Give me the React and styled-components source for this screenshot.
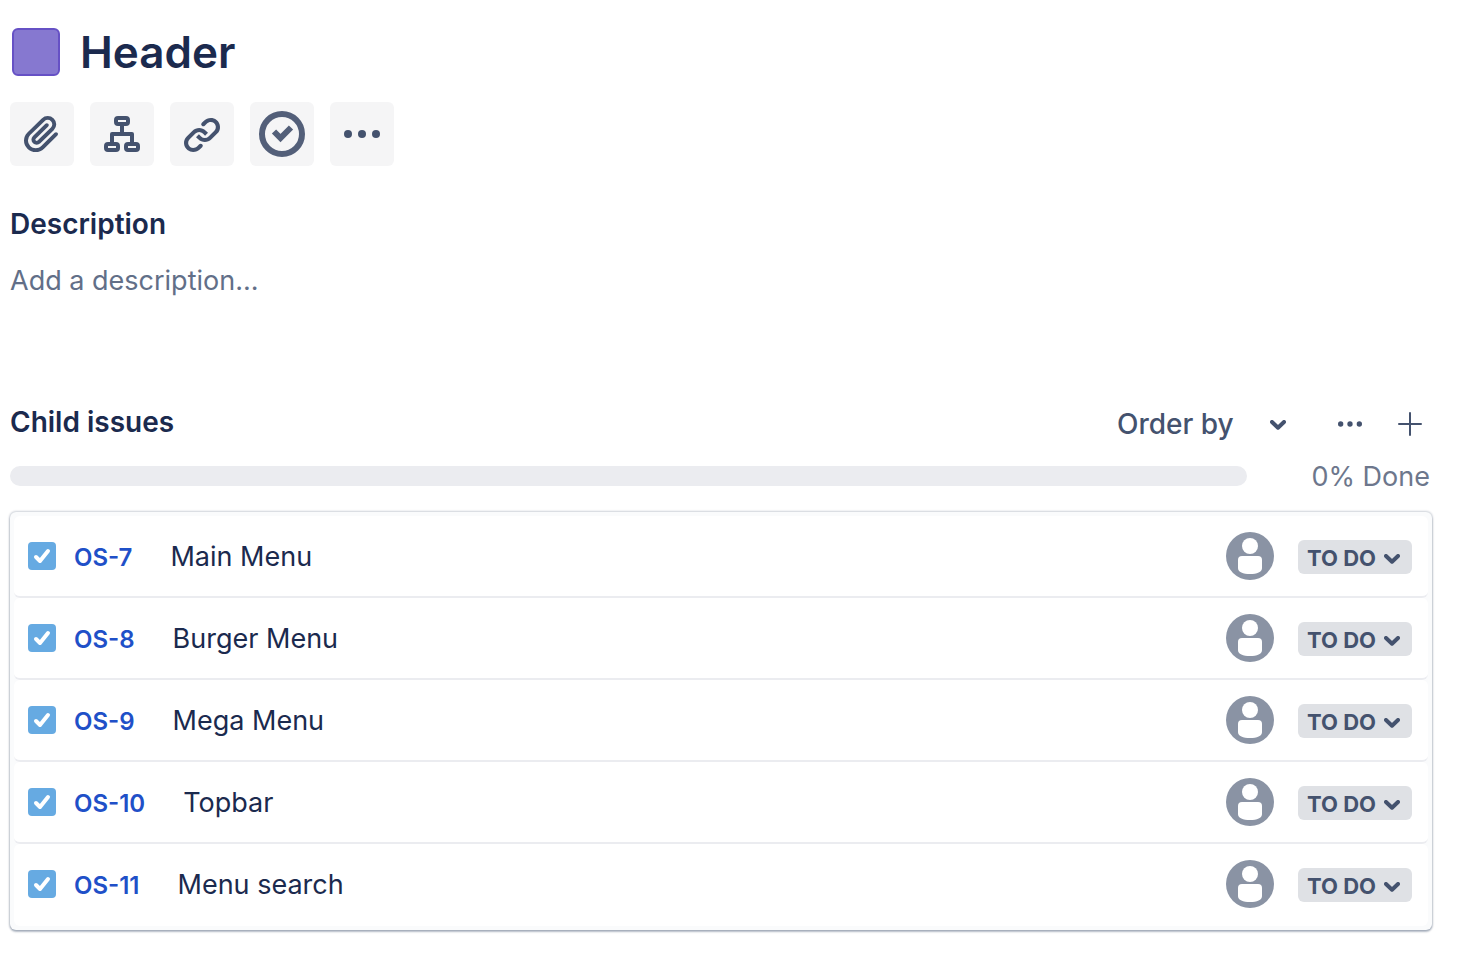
import React from 'react';
import styled, { createGlobalStyle } from 'styled-components';

const GlobalStyle = createGlobalStyle`
  *, *::before, *::after {
    box-sizing: border-box;
  }
  body {
    margin: 0;
    background: #fff;
    color: #1b2a4e;
    font-family: Inter, 'Liberation Sans', sans-serif;
    font-size: 27px;
    line-height: 40px;
  }
  button, input, select {
    font: inherit;
    color: inherit;
  }
`;

const issues = [
  { key: 'OS-7', summary: 'Main Menu' },
  { key: 'OS-8', summary: 'Burger Menu' },
  { key: 'OS-9', summary: 'Mega Menu' },
  { key: 'OS-10', summary: 'Topbar' },
  { key: 'OS-11', summary: 'Menu search' },
];

const AttachmentIcon = () => (
  <svg width="48" height="48" viewBox="0 0 24 24" fill="currentColor" aria-hidden="true">
    <path d="M11.643 17.965c-1.53 1.495-4.016 1.496-5.542.004a3.773 3.773 0 01.002-5.412l7.147-6.985a2.316 2.316 0 013.233-.003c.893.873.895 2.282.004 3.153l-6.703 6.55a.653.653 0 01-.914-.008.62.62 0 010-.902l6.229-6.087a.941.941 0 000-1.353.995.995 0 00-1.384 0l-6.23 6.087a2.502 2.502 0 000 3.607 2.643 2.643 0 003.683.009l6.703-6.55a4.074 4.074 0 00-.003-5.859 4.306 4.306 0 00-6.002.003l-7.148 6.985a5.655 5.655 0 00-.001 8.118c2.29 2.237 6.015 2.238 8.308-.004l6.682-6.53a.942.942 0 000-1.353.995.995 0 00-1.384 0l-6.68 6.53z" />
  </svg>
);

const ChildIssuesIcon = () => (
  <svg width="48" height="48" viewBox="0 0 24 24" fill="none" stroke="currentColor" strokeWidth="2" aria-hidden="true">
    <rect x="9" y="4" width="6" height="3" rx="1" />
    <rect x="4" y="17" width="6" height="3" rx="1" />
    <rect x="14" y="17" width="6" height="3" rx="1" />
    <path d="M12 8v4M7 16.500V12h10v4.500" strokeLinejoin="round" />
  </svg>
);

const LinkIcon = () => (
  <svg width="48" height="48" viewBox="0 0 24 24" fill="currentColor" aria-hidden="true">
    <path d="M12.856 5.457l-.937.92a1.002 1.002 0 000 1.437 1.047 1.047 0 001.463 0l.984-.966c.967-.95 2.542-1.135 3.602-.288a2.54 2.54 0 01.203 3.81l-2.903 2.852a2.646 2.646 0 01-3.696 0l-1.11-1.09L9 13.57l1.108 1.089c1.822 1.788 4.802 1.788 6.622 0l2.905-2.852a4.558 4.558 0 00-.357-6.82c-1.893-1.517-4.695-1.226-6.422.47" />
    <path d="M11.144 19.543l.937-.92a1.002 1.002 0 000-1.437 1.047 1.047 0 00-1.462 0l-.985.966c-.967.95-2.542 1.135-3.602.288a2.54 2.54 0 01-.203-3.81l2.903-2.852a2.646 2.646 0 013.696 0l1.11 1.09L15 11.43l-1.108-1.089c-1.822-1.788-4.802-1.788-6.622 0l-2.905 2.852a4.558 4.558 0 00.357 6.82c1.893 1.517 4.695 1.226 6.422-.47" />
  </svg>
);

const CheckCircleIcon = () => (
  <svg width="48" height="48" viewBox="0 0 48 48" fill="none" stroke="#535f79" strokeWidth="6" aria-hidden="true">
    <circle cx="24" cy="24" r="20" />
    <path d="M16 21.500l6.500 6.500 10.500-10.500" />
  </svg>
);

const MoreIcon = ({ size = 48 }) => (
  <svg width={size} height={size} viewBox="0 0 48 48" fill="currentColor" aria-hidden="true">
    <circle cx="10" cy="24" r="4" />
    <circle cx="24" cy="24" r="4" />
    <circle cx="38" cy="24" r="4" />
  </svg>
);

const PlusIcon = () => (
  <svg width="24" height="24" viewBox="0 0 24 24" fill="none" stroke="currentColor" strokeWidth="2" strokeLinecap="round" aria-hidden="true">
    <path d="M12 1v22M1 12h22" />
  </svg>
);

const ChevronIcon = () => (
  <svg width="16" height="10" viewBox="0 0 16 10" fill="none" stroke="currentColor" strokeWidth="4" strokeLinecap="round" strokeLinejoin="round" aria-hidden="true">
    <path d="M2 2l6 5.700L14 2" />
  </svg>
);

const AvatarIcon = () => (
  <svg width="48" height="48" viewBox="0 0 48 48" role="img" aria-label="Unassigned">
    <circle cx="24" cy="24" r="24" fill="#8a93a4" />
    <circle cx="24" cy="14" r="8" fill="#fff" />
    <path d="M16 24h16a4 4 0 014 4v8c0 4-5 6-12 6s-12-2-12-6v-8a4 4 0 014-4z" fill="#fff" />
  </svg>
);

const App = () => {
  return (
    <Page>
      <GlobalStyle />
      <TitleBar>
        <EpicColor />
        <Title>Header</Title>
      </TitleBar>

      <Toolbar>
        <ToolButton aria-label="Attach"><AttachmentIcon /></ToolButton>
        <ToolButton aria-label="Add a child issue"><ChildIssuesIcon /></ToolButton>
        <ToolButton aria-label="Link issue"><LinkIcon /></ToolButton>
        <ToolButton aria-label="Checklist"><CheckCircleIcon /></ToolButton>
        <ToolButton aria-label="More"><MoreIcon /></ToolButton>
      </Toolbar>

      <Description>
        <SectionTitle as="label" htmlFor="description">Description</SectionTitle>
        <DescriptionInput id="description" type="text" placeholder="Add a description..." />
      </Description>

      <SectionHeader>
        <SectionTitle>Child issues</SectionTitle>
        <Actions>
          <OrderBy>
            <OrderSelect aria-label="Order by">
              <option>Order by</option>
            </OrderSelect>
            <ChevronIcon />
          </OrderBy>
          <IconButton aria-label="More actions"><MoreIcon size={32} /></IconButton>
          <IconButton aria-label="Create child issue"><PlusIcon /></IconButton>
        </Actions>
      </SectionHeader>

      <ProgressRow>
        <ProgressTrack role="progressbar" aria-label="Done" aria-valuenow={0} aria-valuemin={0} aria-valuemax={100} />
        <ProgressLabel>0% Done</ProgressLabel>
      </ProgressRow>

      <IssueList>
        {issues.map((issue) => (
          <IssueRow key={issue.key}>
            <Check>
              <CheckInput type="checkbox" defaultChecked aria-label={issue.summary} />
              <svg width="28" height="28" viewBox="0 0 28 28" fill="none" stroke="#fff" strokeWidth="4" strokeLinecap="round" strokeLinejoin="round" aria-hidden="true">
                <path d="M8 15l4 4 8-10" />
              </svg>
            </Check>
            <IssueKey href={`#${issue.key}`}>{issue.key}</IssueKey>
            <Summary>{issue.summary}</Summary>
            <AvatarIcon />
            <Status>
              <StatusSelect aria-label={`${issue.key} status`}>
                <option>TO DO</option>
              </StatusSelect>
              <ChevronIcon />
            </Status>
          </IssueRow>
        ))}
      </IssueList>
    </Page>
  );
};

const Page = styled.main`
  padding: 20px 52px 40px 10px;
`;

const TitleBar = styled.header`
  display: flex;
  align-items: center;
  gap: 20px;
  height: 64px;
  padding-left: 2px;
`;

const EpicColor = styled.span`
  width: 48px;
  height: 48px;
  border: 2px solid #6651c5;
  border-radius: 6px;
  background: #8678d0;
`;

const Title = styled.h1`
  margin: 0;
  font-size: 44px;
  font-weight: 600;
  line-height: 56px;
`;

const Toolbar = styled.div`
  display: flex;
  gap: 16px;
  margin-top: 18px;
`;

const ToolButton = styled.button`
  display: flex;
  align-items: center;
  justify-content: center;
  width: 64px;
  height: 64px;
  padding: 0;
  border: 0;
  border-radius: 6px;
  background: #f5f5f6;
  color: #44526e;
  cursor: pointer;
`;

const Description = styled.section`
  display: flex;
  flex-direction: column;
  gap: 17px;
  margin-top: 38px;
`;

const SectionTitle = styled.h2`
  margin: 0;
  font-size: 28px;
  font-weight: 600;
  line-height: 40px;
`;

const DescriptionInput = styled.input`
  height: 40px;
  padding: 0;
  border: 0;
  outline: 0;
  background: none;
  &::placeholder {
    color: #626f88;
    opacity: 1;
  }
`;

const SectionHeader = styled.div`
  display: flex;
  align-items: flex-start;
  justify-content: space-between;
  margin-top: 101px;
`;

const Actions = styled.div`
  display: flex;
  align-items: center;
  padding: 2px 2px 0 0;
  color: #44526e;
`;

const OrderBy = styled.div`
  display: grid;
  align-items: center;
  margin-right: 44px;
  > * {
    grid-area: 1 / 1;
  }
  svg {
    justify-self: end;
    margin-top: 2px;
    pointer-events: none;
  }
`;

const OrderSelect = styled.select`
  appearance: none;
  height: 40px;
  padding: 0 52px 0 0;
  border: 0;
  background: none;
  font-size: 28px;
  font-weight: 500;
  cursor: pointer;
`;

const IconButton = styled.button`
  display: flex;
  align-items: center;
  justify-content: center;
  width: 40px;
  height: 40px;
  padding: 0;
  border: 0;
  background: none;
  cursor: pointer;
  & + & {
    margin-left: 20px;
  }
`;

const ProgressRow = styled.div`
  display: flex;
  align-items: center;
  gap: 64px;
  margin-top: 11px;
  padding-right: 2px;
`;

const ProgressTrack = styled.div`
  flex: 1;
  height: 20px;
  border-radius: 10px;
  background: #ebecf0;
`;

const ProgressLabel = styled.span`
  padding-top: 2px;
  color: #6d778c;
`;

const IssueList = styled.ul`
  margin: 15px 0 0;
  padding: 4px;
  border-radius: 6px;
  background: #fafbfc;
  box-shadow: 0 2px 2px rgba(9, 30, 66, 0.25), 0 0 2px 1px rgba(9, 30, 66, 0.2);
  list-style: none;
`;

const IssueRow = styled.li`
  display: flex;
  align-items: center;
  height: 82px;
  padding: 0 16px 0 14px;
  border-bottom: 2px solid #ebecf0;
  border-radius: 6px;
  background: #fff;
  &:last-child {
    border-bottom-color: transparent;
  }
`;

const Check = styled.span`
  display: grid;
  > * {
    grid-area: 1 / 1;
  }
  svg {
    pointer-events: none;
  }
`;

const CheckInput = styled.input`
  appearance: none;
  width: 28px;
  height: 28px;
  margin: 0;
  border-radius: 4px;
  background: #66aae2;
`;

const IssueKey = styled.a`
  margin-left: 18px;
  padding-top: 4px;
  color: #1f50c8;
  font-size: 24px;
  font-weight: 600;
  text-decoration: none;
`;

const Summary = styled.span`
  flex: 1;
  margin-left: 38px;
  padding-top: 2px;
`;

const Status = styled.div`
  display: grid;
  align-items: center;
  margin-left: 24px;
  padding-top: 2px;
  color: #44526e;
  > * {
    grid-area: 1 / 1;
  }
  svg {
    justify-self: end;
    margin: 4px 12px 0 0;
    pointer-events: none;
  }
`;

const StatusSelect = styled.select`
  appearance: none;
  height: 34px;
  padding: 2px 36px 0 9px;
  border: 0;
  border-radius: 6px;
  background: #dfe1e5;
  font-size: 22px;
  font-weight: 700;
  line-height: 32px;
  cursor: pointer;
`;

export default App;
